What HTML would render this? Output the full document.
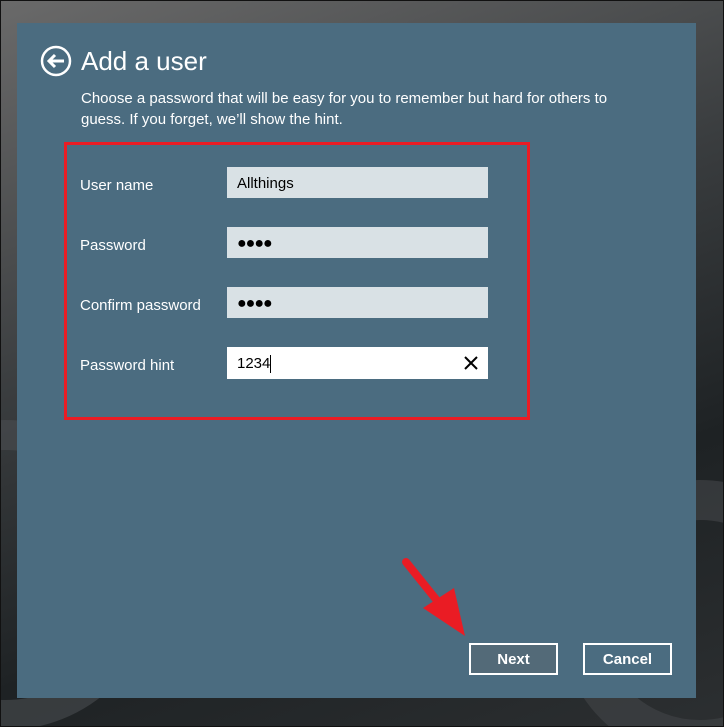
<!DOCTYPE html>
<html style="overflow:hidden;width:724px;height:727px"><head><style>
body{margin:0;width:724px;height:727px;overflow:hidden;background:linear-gradient(160deg,#6a6a6a 0%,#3a3d3f 40%,#1e2224 70%,#2c2f31 100%);font-family:"Liberation Sans",sans-serif;position:relative}
.bg{position:absolute;left:0;top:0;width:724px;height:727px;overflow:hidden}
.c{position:absolute;border-radius:50%}
#panel{position:absolute;left:17px;top:23px;width:679px;height:675px;background:#4b6c80}
.t{position:absolute;color:#fff}
h1{position:absolute;left:64px;top:23px;margin:0;font-weight:normal;font-size:26px;color:#fff}
.desc{left:64px;top:65px;font-size:15px;line-height:21px;width:560px}
#red{position:absolute;left:47px;top:119px;width:460px;height:272px;border:3px solid #ea1c24}
.lab{position:absolute;left:63px;font-size:15px;color:#fff}
.in{position:absolute;left:210px;width:261px;height:31px;background:#d9e1e5;font-size:15px;color:#000;line-height:33px;box-sizing:border-box;padding-left:10px}
.dots{font-size:16px;letter-spacing:-1px}
.btn{position:absolute;top:620px;width:89px;height:32px;border:2px solid #fff;box-sizing:border-box;color:#fff;font-size:15px;text-align:center;line-height:29px;font-weight:bold}
</style></head><body>
<div class="bg">
<div class="c" style="left:-150px;top:420px;width:250px;height:250px;border:30px solid #4a4d50;opacity:.6"></div>
<div class="c" style="left:560px;top:480px;width:200px;height:200px;border:40px solid #3e4244;opacity:.7"></div>
</div>
<div style="position:absolute;left:0;top:0;width:722px;height:725px;border:1px solid #111"></div>
<div id="panel">
<svg style="position:absolute;left:23px;top:22px" width="32" height="32" viewBox="0 0 32 32"><circle cx="16" cy="16" r="14" fill="none" stroke="#fff" stroke-width="2.5"/><path d="M24 16H9M15 10l-6 6 6 6" fill="none" stroke="#fff" stroke-width="3"/></svg>
<h1>Add a user</h1>
<div class="t desc">Choose a password that will be easy for you to remember but hard for others to guess. If you forget, we’ll show the hint.</div>
<div id="red"></div>
<div class="lab" style="top:154px">User name</div>
<div class="in" style="top:144px">Allthings</div>
<div class="lab" style="top:214px">Password</div>
<div class="in dots" style="top:204px">●●●●</div>
<div class="lab" style="top:274px">Confirm password</div>
<div class="in dots" style="top:264px">●●●●</div>
<div class="lab" style="top:334px">Password hint</div>
<div class="in" style="top:324px;background:#fff;height:32px">1234<span style="display:inline-block;width:1px;height:18px;background:#000;vertical-align:middle"></span>
<svg style="position:absolute;right:9px;top:8px" width="16" height="16" viewBox="0 0 16 16"><path d="M2 2L14 14M14 2L2 14" stroke="#000" stroke-width="2"/></svg></div>
<svg style="position:absolute;left:380px;top:530px" width="80" height="85" viewBox="0 0 80 85"><path d="M9 9L50 60" stroke="#ea1c24" stroke-width="8" stroke-linecap="round"/><path d="M26 55L57 35L68 83Z" fill="#ea1c24"/></svg>
<div class="btn" style="left:452px;background:#536a78">Next</div>
<div class="btn" style="left:566px">Cancel</div>
</div>
</body></html>
